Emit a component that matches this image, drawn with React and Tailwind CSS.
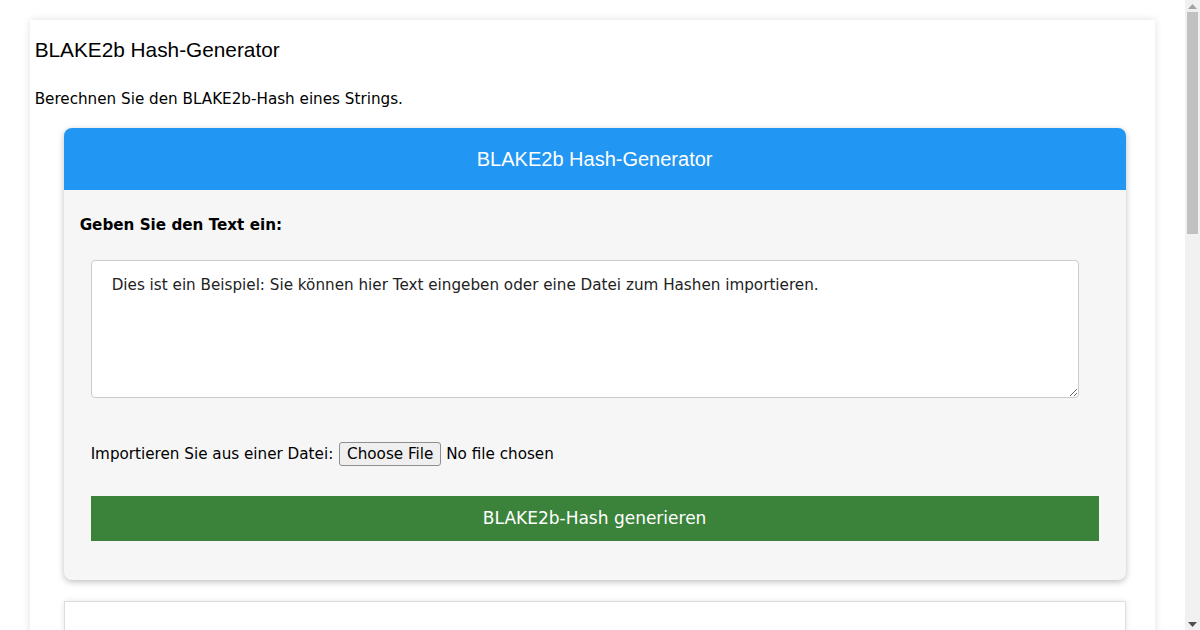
function Scrollbar() {
  return (
    <div className="w-[15px] h-[630px] shrink-0 bg-[#f1f1f1] flex flex-col items-center">
      <div className="h-[12px] flex items-center justify-center">
        <svg width="9" height="5" viewBox="0 0 9 5">
          <path d="M4.5 0 L9 5 L0 5 Z" fill="#a3a3a3" />
        </svg>
      </div>
      <div className="w-[11px] h-[222px] bg-[#c1c1c1]" />
      <div className="flex-1" />
      <div className="h-[12px] flex items-center justify-center">
        <svg width="9" height="5" viewBox="0 0 9 5">
          <path d="M0 0 L9 0 L4.5 5 Z" fill="#505050" />
        </svg>
      </div>
    </div>
  );
}

export default function App() {
  return (
    <div className="flex h-[630px] overflow-hidden bg-white font-['DejaVu_Sans',sans-serif] text-black">
      <main className="flex-1 overflow-hidden">
        <div className="w-[95%] mx-auto mt-[20px] bg-white shadow-[0_0_8px_rgba(0,0,0,0.12)] px-[5px] pt-[17px] pb-[40px]">
          <h1 className="font-['Liberation_Sans',Arial,sans-serif] text-[20.8px] leading-[26px]">
            BLAKE2b Hash-Generator
          </h1>
          <p className="mt-[27px] text-[15.2px] leading-[18px]">
            Berechnen Sie den BLAKE2b-Hash eines Strings.
          </p>

          <div className="ml-[29px] w-[1062px] mt-[20px] rounded-lg overflow-hidden bg-[#f6f6f6] shadow-[0_2px_6px_rgba(0,0,0,0.25)]">
            <div className="h-[62px] bg-[#2196f3] flex items-center justify-center text-white font-['Liberation_Sans',Arial,sans-serif] text-[20px]">
              BLAKE2b Hash-Generator
            </div>
            <div className="px-[16px] pt-[26px] pb-[39px]">
              <label className="block font-bold text-[15.2px] leading-[18px]">Geben Sie den Text ein:</label>
              <textarea
                className="block ml-[11px] mt-[26px] w-[988px] h-[138px] bg-white border border-[#cccccc] rounded px-[20px] py-[15px] text-[15.2px] leading-[18px] text-[#222] resize-y outline-none"
                defaultValue="Dies ist ein Beispiel: Sie können hier Text eingeben oder eine Datei zum Hashen importieren."
              />
              <div className="ml-[11px] mt-[45px] h-[22px] flex items-center text-[15.2px] leading-[18px]">
                <span>Importieren Sie aus einer Datei:</span>
                <span className="ml-[6px] h-[24px] w-[102px] flex items-center justify-center border border-[#8f8f8f] rounded-[3px] bg-[#efefef]">
                  Choose File
                </span>
                <span className="ml-[5px]">No file chosen</span>
              </div>
              <button className="block ml-[11px] mt-[31px] w-[1008px] h-[45px] bg-[#3b833b] text-white text-[17px]">
                BLAKE2b-Hash generieren
              </button>
            </div>
          </div>

          <div className="ml-[29px] w-[1062px] mt-[21px] h-[200px] bg-white border border-[#dddddd] shadow-[0_0_6px_rgba(0,0,0,0.1)]"></div>
        </div>
      </main>
      <Scrollbar />
    </div>
  );
}
